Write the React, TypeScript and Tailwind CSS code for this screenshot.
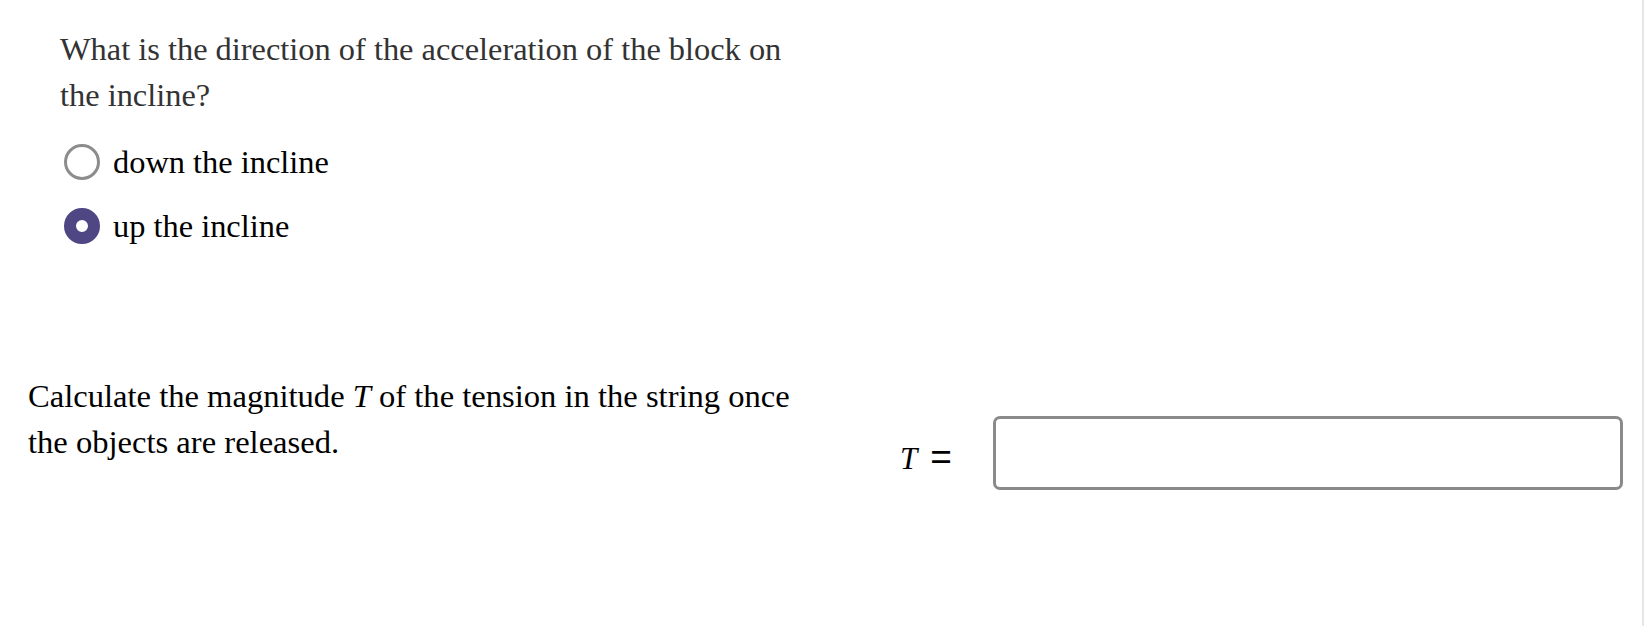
import React from "react";

function Radio({ checked }: { checked: boolean }) {
  return checked ? (
    <span className="block w-[36px] h-[36px] rounded-full border-[12px] border-[#4f4684] bg-white shrink-0" />
  ) : (
    <span className="block w-[36px] h-[36px] rounded-full border-[3px] border-[#8c8c8c] bg-white shrink-0" />
  );
}

export default function App() {
  return (
    <div
      className="w-[1644px] h-[626px] bg-white border-r-2 border-[#e6e6e6] overflow-hidden"
      style={{ fontFamily: '"Liberation Serif", "Times New Roman", serif' }}
    >
      <div className="pl-[60px] pt-[26px]">
        <p className="text-[32.4px] leading-[46px] text-[#333333] w-[750px]">
          What is the direction of the acceleration of the block on the incline?
        </p>
        <div className="mt-[21px] flex flex-col gap-[18px]">
          <label className="flex items-center h-[46px] gap-[13px] pl-[4px]">
            <Radio checked={false} />
            <span className="text-[32.4px] leading-[46px] text-black">down the incline</span>
          </label>
          <label className="flex items-center h-[46px] gap-[13px] pl-[4px]">
            <Radio checked={true} />
            <span className="text-[32.4px] leading-[46px] text-black">up the incline</span>
          </label>
        </div>
      </div>

      <div className="flex items-start pl-[28px] mt-[124px]">
        <p className="text-[32.6px] leading-[46px] text-black w-[790px]">
          Calculate the magnitude <i>T</i> of the tension in the string once the objects are released.
        </p>
        <div className="flex items-center mt-[43px] ml-[82px]">
          <span className="flex items-baseline text-black pt-[10px] w-[93px] whitespace-nowrap">
            <i className="text-[31px] leading-[40px]">T</i>
            <span
              className="ml-[13px] text-[37px] leading-[40px]"
              style={{ fontFamily: '"Liberation Sans", Arial, sans-serif' }}
            >
              =
            </span>
          </span>
          <div className="w-[630px] h-[74px] border-[3px] border-[#8a8a8a] rounded-[7px] bg-white" />
        </div>
      </div>
    </div>
  );
}
